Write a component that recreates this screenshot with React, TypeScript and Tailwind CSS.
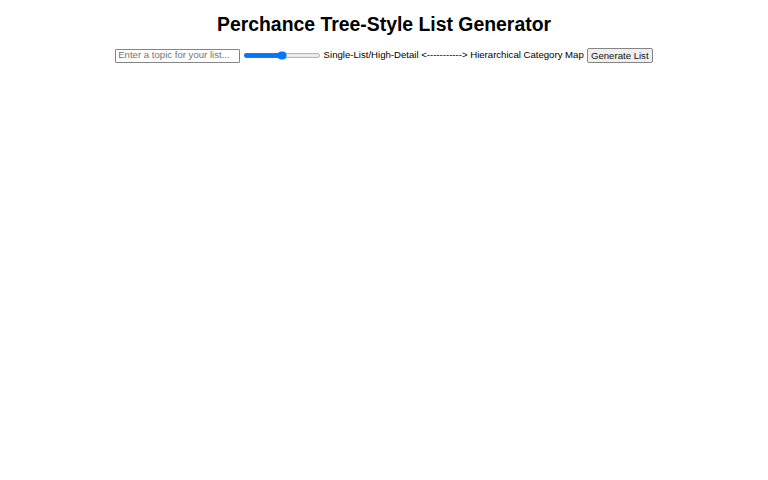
import { useState } from 'react';

export default function App() {
  const [topic, setTopic] = useState('');
  const [depth, setDepth] = useState(50);

  return (
    <div className="min-h-screen bg-white text-black font-['Liberation_Sans',Arial,sans-serif]">
      <h1 className="text-center text-[19.4px] font-bold leading-[22px] pt-[13px] pb-[13px]">
        Perchance Tree-Style List Generator
      </h1>
      <div className="flex items-center justify-center gap-[3px] text-[9.6px]">
        <input
          type="text"
          value={topic}
          onChange={(e) => setTopic(e.target.value)}
          placeholder="Enter a topic for your list..."
          className="w-[125px] h-[14px] border border-[#858585] rounded-[1px] px-[2px] text-[9.6px] placeholder:text-[#757575] outline-none"
        />
        <input
          type="range"
          min={0}
          max={100}
          value={depth}
          onChange={(e) => setDepth(Number(e.target.value))}
          className="[zoom:0.6] w-[129px] accent-[#0075ff]"
        />
        <span>Single-List/High-Detail &lt;-----------&gt; Hierarchical Category Map</span>
        <button className="w-[66px] h-[15px] text-[9.6px] leading-[11px] text-[#111] bg-[#efefef] border border-[#858585] rounded-[2px]">
          Generate List
        </button>
      </div>
    </div>
  );
}
